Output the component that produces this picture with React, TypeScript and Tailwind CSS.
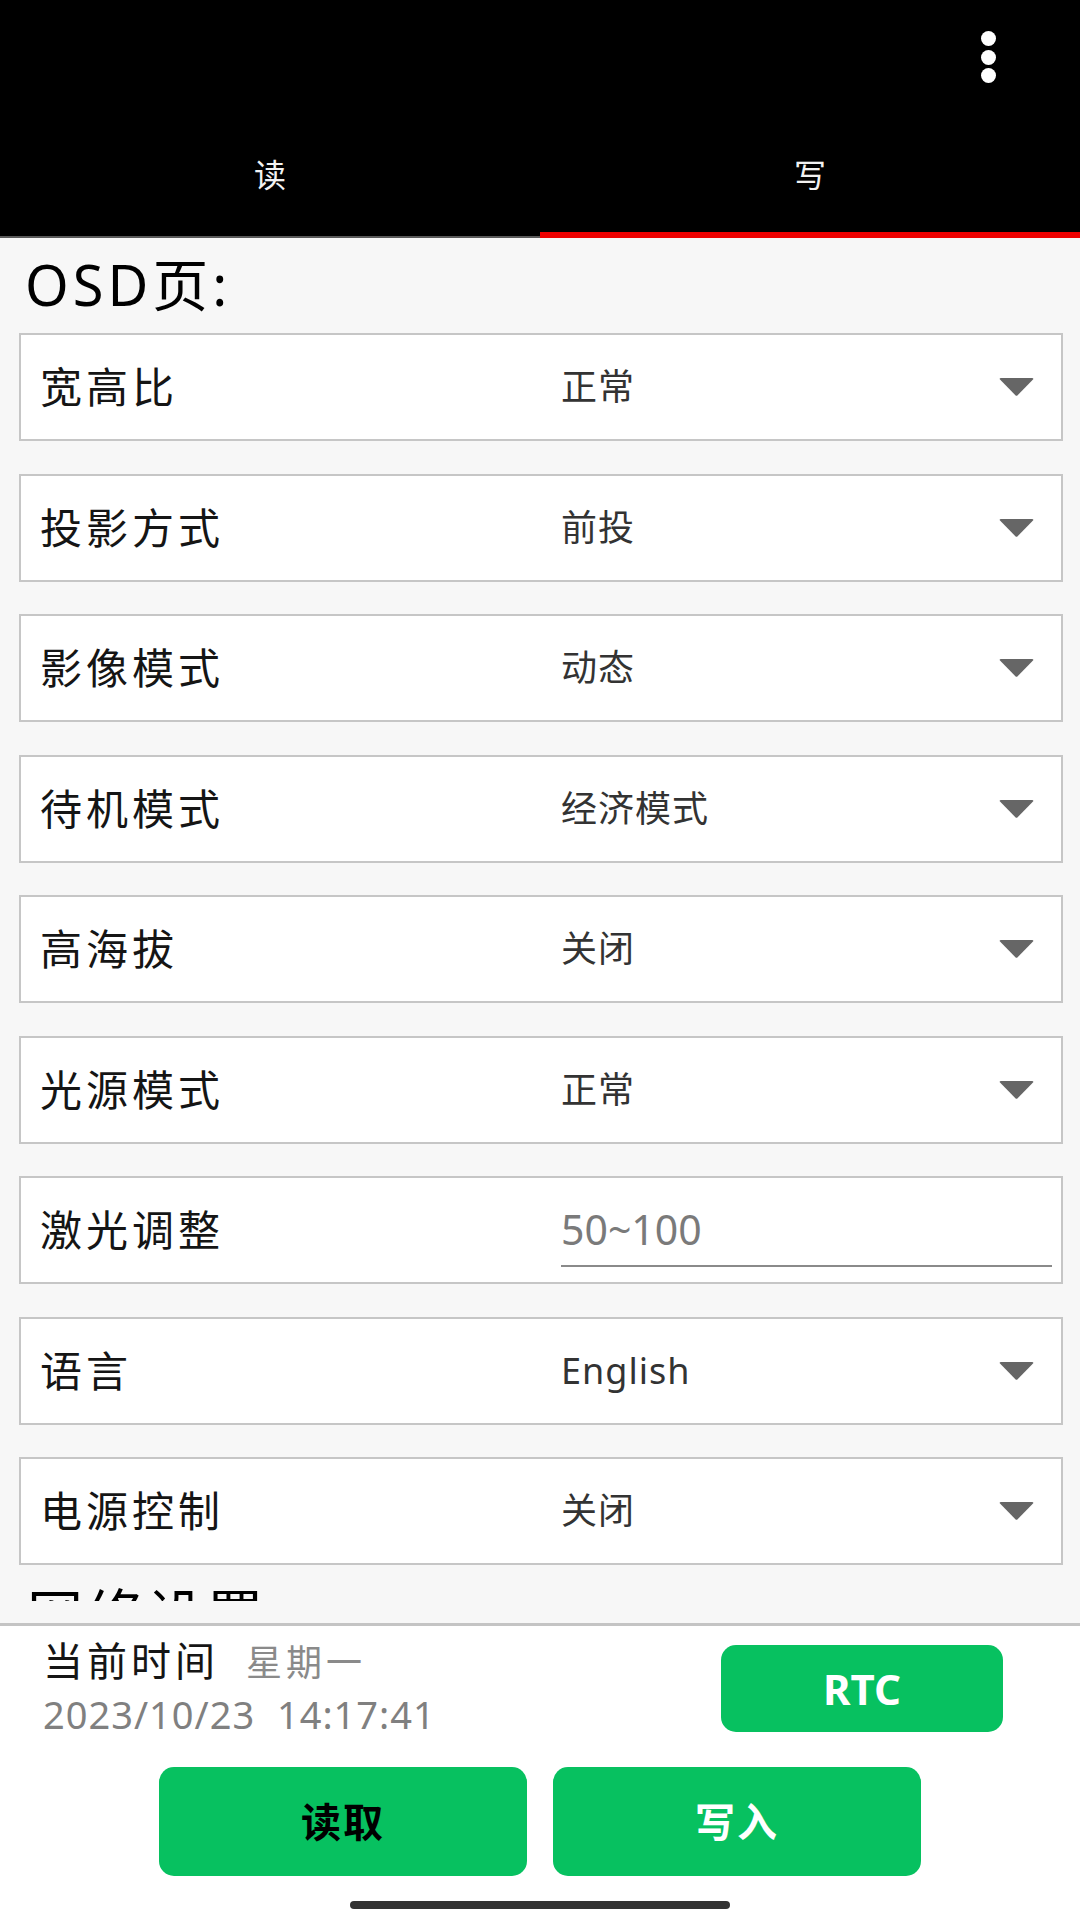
import React from 'react'

interface Row {
  label: string
  value: string
  input?: boolean
}

const rows: Row[] = [
  { label: '宽高比', value: '正常' },
  { label: '投影方式', value: '前投' },
  { label: '影像模式', value: '动态' },
  { label: '待机模式', value: '经济模式' },
  { label: '高海拔', value: '关闭' },
  { label: '光源模式', value: '正常' },
  { label: '激光调整', value: '50~100', input: true },
  { label: '语言', value: 'English' },
  { label: '电源控制', value: '关闭' },
]

function Caret() {
  return (
    <svg width="35" height="18" viewBox="0 0 35 18" className="shrink-0">
      <path d="M1 1.5 Q0 0 2 0 L33 0 Q35 0 34 1.5 L18.6 17.2 Q17.5 18.3 16.4 17.2 Z" fill="#666666" />
    </svg>
  )
}

function SettingRow({ row }: { row: Row }) {
  return (
    <div className="flex h-[108px] items-center border-2 border-[#c6c6c6] bg-white pr-[27px]">
      <div className="w-[540px] shrink-0 pl-[19px] text-[42px] leading-[48px] tracking-[4px] text-[#151515]">
        {row.label}
      </div>
      {row.input ? (
        <div className="mr-[-18px] flex h-[74px] flex-1 items-center border-b-2 border-[#8a8a8a] text-[41px] leading-[48px] text-[#7a7a7a]">
          {row.value}
        </div>
      ) : (
        <>
          <div className="flex-1 text-[36px] leading-[44px] tracking-[1px] text-[#333333]">{row.value}</div>
          <Caret />
        </>
      )}
    </div>
  )
}

export default function App() {
  return (
    <div className="flex h-[1920px] w-[1080px] flex-col overflow-hidden bg-[#f7f7f7] font-['Noto_Sans','Noto_Sans_CJK_SC',sans-serif]">
      {/* Toolbar + tabs */}
      <div className="flex h-[238px] shrink-0 flex-col bg-black">
        <div className="flex h-[118px] justify-end pr-[84px] pt-[31px]">
          <div className="flex flex-col gap-[3.5px]">
            <div className="h-[15px] w-[15px] rounded-full bg-white" />
            <div className="h-[15px] w-[15px] rounded-full bg-white" />
            <div className="h-[15px] w-[15px] rounded-full bg-white" />
          </div>
        </div>
        <div className="flex flex-1">
          <div className="flex flex-1 flex-col">
            <div className="flex flex-1 items-center justify-center text-[32px] text-[#f2f2f2]">读</div>
            <div className="h-[6px] border-b-2 border-[#5a5a5a]" />
          </div>
          <div className="flex flex-1 flex-col">
            <div className="flex flex-1 items-center justify-center text-[32px] text-[#f2f2f2]">写</div>
            <div className="h-[6px] bg-[#ee0000]" />
          </div>
        </div>
      </div>

      {/* Scrolling settings */}
      <div className="h-[1363px] shrink-0 overflow-hidden pl-[19px] pr-[17px]">
        <div className="mb-[14px] ml-[6px] pt-[11px] text-[56px] leading-[70px] tracking-[4px] text-black">OSD页:</div>
        <div className="flex flex-col gap-[32.5px]">
          {rows.map(r => (
            <SettingRow key={r.label} row={r} />
          ))}
        </div>
        <div className="ml-[8px] mt-[14px] text-[56px] leading-[70px] tracking-[4px] text-black">网络设置:</div>
      </div>
      <div className="h-[22px] shrink-0" />

      {/* Bottom panel */}
      <div className="flex flex-1 flex-col border-t-[3px] border-[#c4c4c4] bg-white">
        <div className="flex items-start justify-between pl-[43px] pr-[77px] pt-[11px]">
          <div className="flex flex-col">
            <div className="flex items-baseline">
              <span className="text-[40px] leading-[48px] tracking-[4px] text-[#151515]">当前时间</span>
              <span className="ml-[27px] text-[36px] leading-[48px] tracking-[4px] text-[#8a8a8a]">星期一</span>
            </div>
            <div className="mt-[3px] whitespace-pre text-[38px] leading-[48px] tracking-[1px] text-[#808080]">2023/10/23  14:17:41</div>
          </div>
          <button className="mt-[8px] flex h-[87px] w-[282px] items-center justify-center rounded-[15px] bg-[#07c160] text-[42px] font-bold text-white">
            RTC
          </button>
        </div>
        <div className="mt-[29px] flex justify-center gap-[26px]">
          <button className="flex h-[109px] w-[368px] items-center justify-center rounded-[15px] bg-[#07c160] text-[40px] font-bold tracking-[2px] text-black">
            读取
          </button>
          <button className="flex h-[109px] w-[368px] items-center justify-center rounded-[15px] bg-[#07c160] text-[40px] font-bold tracking-[2px] text-white">
            写入
          </button>
        </div>
        <div className="mx-auto mt-[25px] h-[8px] w-[380px] rounded-full bg-[#333333]" />
      </div>
    </div>
  )
}
